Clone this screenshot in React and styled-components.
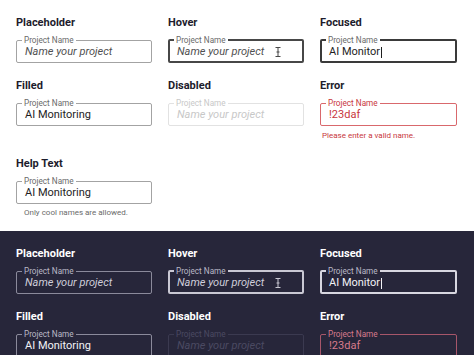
import React from "react";
import styled, { createGlobalStyle } from "styled-components";

const GlobalStyle = createGlobalStyle`
  html, body {
    margin: 0;
    padding: 0;
    overflow: hidden;
    font-family: Roboto, "Liberation Sans", sans-serif;
  }
`;

const themes = {
  light: {
    bg: "#ffffff",
    title: "#1d1c2c",
    border: "#a3a3a3",
    hover: "#474747",
    focus: "#3a3a3a",
    legend: "#6a6a6a",
    placeholder: "#505050",
    value: "#1e1e1e",
    disabledBorder: "#e2e2e2",
    disabledText: "#c8c8c8",
    error: "#d9686c",
    errorText: "#c8373d",
    help: "#6a6a6a",
  },
  dark: {
    bg: "#27263a",
    title: "#ffffff",
    border: "#8b8a9b",
    hover: "#c9c8d3",
    focus: "#d8d7e0",
    legend: "#b9b8c6",
    placeholder: "#cfcedb",
    value: "#f2f2f6",
    disabledBorder: "#3b3a50",
    disabledText: "#4b4a62",
    error: "#a7566a",
    errorText: "#d77b8c",
    help: "#a9a8b8",
  },
};

const Section = styled.section`
  background: ${(p) => p.$t.bg};
  padding: 16px 16px 13px;
  display: grid;
  grid-template-columns: 136px 136px 137px;
  column-gap: 16px;
  row-gap: 16px;
  align-items: start;
`;

const Cell = styled.div`
  display: flex;
  flex-direction: column;
`;

const Title = styled.div`
  font-size: 11px;
  line-height: 14px;
  font-weight: 700;
  color: ${(p) => p.$t.title};
  margin-bottom: 5px;
`;

const borderColor = (p) => {
  const t = p.$t;
  if (p.$state === "hover") return t.hover;
  if (p.$state === "focused") return t.focus;
  if (p.$state === "disabled") return t.disabledBorder;
  if (p.$state === "error") return t.error;
  return t.border;
};

const thick = (p) => (p.$state === "hover" || p.$state === "focused" ? 2 : 1);

const Field = styled.fieldset`
  margin: 0;
  padding: 0 ${(p) => 9 - thick(p)}px ${(p) => 4 - thick(p)}px;
  border: ${thick}px solid ${borderColor};
  border-radius: 2px;
  min-width: 0;
`;

const Legend = styled.legend`
  font-size: 8.2px;
  line-height: 10px;
  padding: 0 2px;
  margin-left: -3px;
  color: ${(p) =>
    p.$state === "disabled"
      ? p.$t.disabledText
      : p.$state === "error"
      ? p.$t.errorText
      : p.$t.legend};
`;

const Value = styled.div`
  display: flex;
  align-items: center;
  height: 14px;
  font-size: 11px;
  line-height: 14px;
  white-space: nowrap;
  font-style: ${(p) => (p.$placeholder ? "italic" : "normal")};
  color: ${(p) =>
    p.$state === "disabled"
      ? p.$t.disabledText
      : p.$state === "error"
      ? p.$t.errorText
      : p.$placeholder
      ? p.$t.placeholder
      : p.$t.value};
`;

const Caret = styled.span`
  display: inline-block;
  width: 1px;
  height: 11px;
  margin-left: 1px;
  background: ${(p) => p.$t.value};
`;

const Beam = styled.svg`
  margin-left: 11px;
  color: ${(p) => p.$t.hover};
`;

const Help = styled.div`
  font-size: 8px;
  line-height: 11px;
  margin-top: ${(p) => (p.$error ? 4 : 3)}px;
  padding-left: ${(p) => (p.$error ? 2 : 8)}px;
  color: ${(p) => (p.$error ? p.$t.errorText : p.$t.help)};
`;

const cells = [
  { title: "Placeholder", state: "default", placeholder: true },
  { title: "Hover", state: "hover", placeholder: true, beam: true },
  { title: "Focused", state: "focused", value: "AI Monitor", caret: true },
  { title: "Filled", state: "default", value: "AI Monitoring" },
  { title: "Disabled", state: "disabled", placeholder: true },
  {
    title: "Error",
    state: "error",
    value: "!23daf",
    help: "Please enter a valid name.",
    helpError: true,
  },
  {
    title: "Help Text",
    state: "default",
    value: "AI Monitoring",
    help: "Only cool names are allowed.",
  },
];

function TextField({ t, c }) {
  return (
    <Cell>
      <Title $t={t}>{c.title}</Title>
      <Field $t={t} $state={c.state}>
        <Legend $t={t} $state={c.state}>
          Project Name
        </Legend>
        <Value $t={t} $state={c.state} $placeholder={c.placeholder}>
          {c.placeholder ? "Name your project" : c.value}
          {c.caret && <Caret $t={t} />}
          {c.beam && (
            <Beam $t={t} width="6" height="10" viewBox="0 0 6 10">
              <path
                d="M0.5 0.5h5M3 0.5v9M0.5 9.5h5M1.5 5h3"
                stroke="currentColor"
                strokeWidth="1"
                fill="none"
              />
            </Beam>
          )}
        </Value>
      </Field>
      {c.help && (
        <Help $t={t} $error={c.helpError}>
          {c.help}
        </Help>
      )}
    </Cell>
  );
}

export default function App() {
  return (
    <>
      <GlobalStyle />
      {["light", "dark"].map((mode) => (
        <Section key={mode} $t={themes[mode]}>
          {cells.map((c) => (
            <TextField key={c.title} t={themes[mode]} c={c} />
          ))}
        </Section>
      ))}
    </>
  );
}
